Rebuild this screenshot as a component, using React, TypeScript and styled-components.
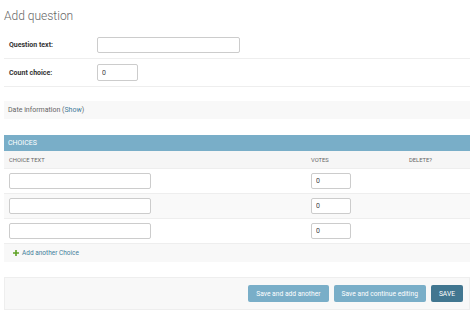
import React from 'react';
import styled, { createGlobalStyle } from 'styled-components';

const Global = createGlobalStyle`
  html, body {
    margin: 0;
    padding: 0;
    background: #fff;
  }
  body {
    font-family: Roboto, "Liberation Sans", sans-serif;
    color: #333;
  }
`;

const Page = styled.div`
  padding: 0 4px;
  width: 466px;
`;

const Title = styled.h1`
  margin: 0;
  padding: 9px 0 0;
  height: 23px;
  font-size: 12px;
  line-height: 14px;
  font-weight: 300;
  color: #666;
`;

const Fieldset = styled.div`
  margin: 0;
`;

const FormRow = styled.div`
  display: flex;
  align-items: center;
  padding: 5px 5px;
  border-bottom: 1px solid #eee;
`;

const Label = styled.label`
  width: 88px;
  font-size: 7px;
  font-weight: 700;
  color: #333;
`;

const TextInput = styled.input<{ $w: number; $h?: number }>`
  box-sizing: border-box;
  width: ${(p) => p.$w}px;
  height: ${(p) => p.$h ?? 16}px;
  border: 1px solid #ccc;
  border-radius: 2px;
  padding: 0 4px;
  font-family: Roboto, "Liberation Sans", sans-serif;
  font-size: 7px;
  color: #444;
  background: #fff;
  outline: none;
`;

const Collapsed = styled.div`
  margin-top: 14px;
  height: 18px;
  display: flex;
  align-items: center;
  padding: 0 4px;
  background: #f8f8f8;
  font-size: 7px;
  color: #666;
`;

const ShowLink = styled.a`
  color: #447e9b;
  text-decoration: none;
`;

const Inline = styled.div`
  margin-top: 16px;
`;

const InlineHeader = styled.h2`
  margin: 0;
  height: 16px;
  display: flex;
  align-items: center;
  padding: 0 4px;
  background: #79aec8;
  color: #fff;
  font-size: 7px;
  font-weight: 400;
  text-transform: uppercase;
`;

const Table = styled.table`
  width: 466px;
  border-collapse: collapse;
  table-layout: fixed;
`;

const Th = styled.th<{ $w?: number }>`
  ${(p) => (p.$w ? `width: ${p.$w}px;` : '')}
  height: 17px;
  padding: 0 5px;
  background: #f6f6f6;
  text-align: left;
  font-size: 5.8px;
  font-weight: 400;
  color: #666;
  text-transform: uppercase;
  border-bottom: 1px solid #eee;
`;

const Tr = styled.tr<{ $alt?: boolean }>`
  background: ${(p) => (p.$alt ? '#f9f9f9' : '#fff')};
`;

const Td = styled.td`
  padding: 4px 5px 4px;
  border-bottom: 1px solid #eee;
  vertical-align: middle;
  line-height: 0;
`;

const AddRow = styled.td`
  height: 18px;
  padding: 0 9px;
  background: #f8f8f8;
  font-size: 6.5px;
`;

const AddLink = styled.a`
  display: inline-flex;
  align-items: center;
  gap: 3px;
  color: #447e9b;
  text-decoration: none;
`;

const SubmitRow = styled.div`
  margin-top: 15px;
  padding: 7px 6px 7px 7px;
  display: flex;
  justify-content: flex-end;
  gap: 5px;
  background: #f8f8f8;
  border: 1px solid #eee;
`;

const Button = styled.button<{ $primary?: boolean }>`
  height: 17px;
  padding: 0 8px;
  border: none;
  border-radius: 2px;
  background: ${(p) => (p.$primary ? '#417690' : '#79aec8')};
  color: #fff;
  font-family: Roboto, "Liberation Sans", sans-serif;
  font-size: 6.7px;
  text-transform: ${(p) => (p.$primary ? 'uppercase' : 'none')};
  cursor: pointer;
`;

const PlusIcon = () => (
  <svg width="6" height="6" viewBox="0 0 6 6">
    <path d="M2.2 0h1.6v2.2H6v1.6H3.8V6H2.2V3.8H0V2.2h2.2z" fill="#5fa225" />
  </svg>
);

const choices = [0, 1, 2];

export default function App() {
  return (
    <Page>
      <Global />
      <Title>Add question</Title>
      <Fieldset>
        <FormRow>
          <Label>Question text:</Label>
          <TextInput $w={143} />
        </FormRow>
        <FormRow>
          <Label>Count choice:</Label>
          <TextInput $w={41} $h={17} defaultValue="0" />
        </FormRow>
      </Fieldset>
      <Collapsed>
        Date information (<ShowLink href="#">Show</ShowLink>)
      </Collapsed>
      <Inline>
        <InlineHeader>Choices</InlineHeader>
        <Table>
          <thead>
            <tr>
              <Th $w={292}>Choice text</Th>
              <Th $w={88}>Votes</Th>
              <Th>Delete?</Th>
            </tr>
          </thead>
          <tbody>
            {choices.map((i) => (
              <Tr key={i} $alt={i % 2 === 1}>
                <Td>
                  <TextInput $w={142} />
                </Td>
                <Td>
                  <TextInput $w={40} defaultValue="0" />
                </Td>
                <Td />
              </Tr>
            ))}
            <tr>
              <AddRow colSpan={3}>
                <AddLink href="#">
                  <PlusIcon />
                  Add another Choice
                </AddLink>
              </AddRow>
            </tr>
          </tbody>
        </Table>
      </Inline>
      <SubmitRow>
        <Button>Save and add another</Button>
        <Button>Save and continue editing</Button>
        <Button $primary>Save</Button>
      </SubmitRow>
    </Page>
  );
}
